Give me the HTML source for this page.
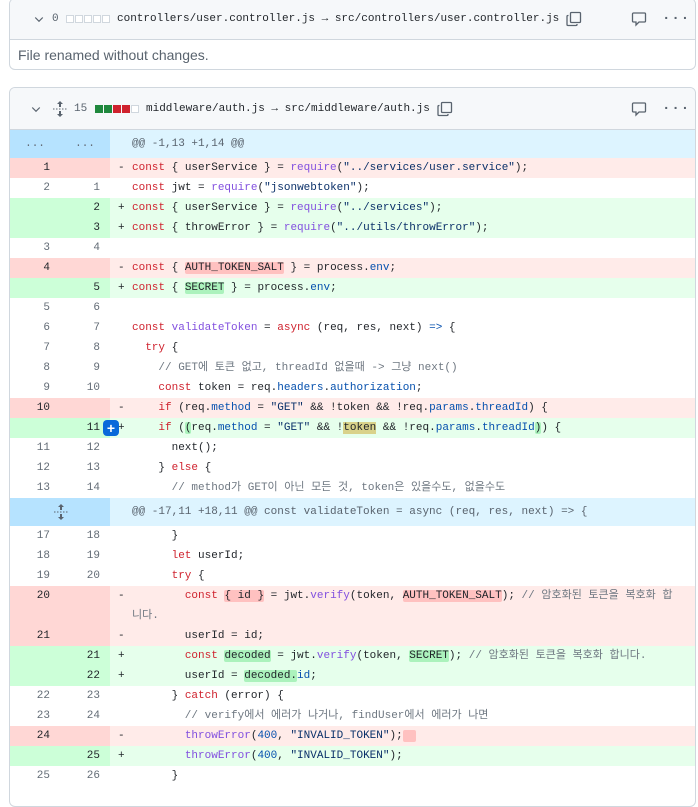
<!DOCTYPE html>
<html><head><meta charset="utf-8"><style>
*{box-sizing:border-box;margin:0;padding:0}
body{width:698px;height:785px;overflow:hidden;background:#fff;font-family:"Liberation Sans","Noto Sans CJK KR",sans-serif;position:relative}
.box{position:absolute;left:9px;width:687px;border:1px solid #d0d7de;border-radius:6px;overflow:hidden;background:#fff}
.hdr{height:42px;background:#f6f8fa;border-bottom:1px solid #d0d7de;position:relative;font-family:"Liberation Mono","Noto Sans CJK KR",monospace;font-size:11px;color:#1f2328}
.hdr>*{position:absolute;top:50%;transform:translateY(-50%);white-space:nowrap}
.sq{display:inline-block;width:8px;height:8px;margin-right:1px;vertical-align:middle}
.mono{font-family:"Liberation Mono","Noto Sans CJK KR",monospace;font-size:11px}
.row{display:flex;height:20px;line-height:20px;color:#1f2328}
.o,.n{width:50px;text-align:right;padding-right:10px;color:#636c76;flex:none}
.c{flex:1;position:relative;white-space:pre}
.c .s{position:absolute;left:8px}
.c .t{position:absolute;left:22px;white-space:pre}
.del{background:#ffebe9}.del .o,.del .n{background:#ffd7d5;color:#1f2328}
.add{background:#e6ffec}.add .o,.add .n{background:#ccffd8;color:#1f2328}
.hunk{height:28px;line-height:28px;background:#ddf4ff}
.hunk .g{width:100px;background:#b6e3ff;flex:none;color:#636c76}
.hunk .c{color:#59636e;padding-left:22px}
.k{color:#cf222e}.f{color:#8250df}.p{color:#0550ae}.st{color:#0a3069}.cm{color:#6e7781}
.dx{background:#ffc1c0;border-radius:2px}.ax{background:#abf2bc;border-radius:2px}
.ay{background:#d9d28a;}
</style></head><body>

<div class="box" style="top:-2px;height:72px">
 <div class="hdr" style="height:41px">
  <svg style="left:23px" width="12" height="12" viewBox="0 0 16 16"><path d="M3 6l5 5 5-5" stroke="#59636e" stroke-width="1.6" fill="none"/></svg>
  <span style="left:42px;color:#59636e">0</span>
  <span style="left:56px;line-height:0"><i class="sq" style="background:#fff;border:1px solid #d0d7de"></i><i class="sq" style="background:#fff;border:1px solid #d0d7de"></i><i class="sq" style="background:#fff;border:1px solid #d0d7de"></i><i class="sq" style="background:#fff;border:1px solid #d0d7de"></i><i class="sq" style="background:#fff;border:1px solid #d0d7de"></i></span>
  <span style="left:107px">controllers/user.controller.js → src/controllers/user.controller.js</span>
  <svg style="left:556px" width="16" height="16" viewBox="0 0 16 16"><path d="M5.5 1.5h8a1 1 0 011 1v8a1 1 0 01-1 1h-8a1 1 0 01-1-1v-8a1 1 0 011-1zM2.5 4.5h-0.5a1 1 0 00-1 1v8a1 1 0 001 1h8a1 1 0 001-1v-.5" stroke="#59636e" stroke-width="1.3" fill="none"/></svg>
  <svg style="left:621px" width="16" height="16" viewBox="0 0 16 16"><path d="M2.5 2h11a1 1 0 011 1v7a1 1 0 01-1 1H8l-3 3v-3H2.5a1 1 0 01-1-1V3a1 1 0 011-1z" stroke="#59636e" stroke-width="1.3" fill="none"/></svg>
  <span style="left:652px;color:#59636e;font-size:14px;letter-spacing:1px;font-weight:bold">···</span>
 </div>
 <div style="padding:0 8px;line-height:30px;font-size:14px;color:#59636e">File renamed without changes.</div>
</div>

<div class="box" style="top:87px;height:720px">
 <div class="hdr">
  <svg style="left:20px" width="12" height="12" viewBox="0 0 16 16"><path d="M3 6l5 5 5-5" stroke="#59636e" stroke-width="1.6" fill="none"/></svg>
  <svg style="left:43px" width="14" height="16" viewBox="0 0 14 16"><path d="M7 0l-3 3h2v3h2V3h2zM7 16l-3-3h2v-3h2v3h2z" fill="#59636e"/><path d="M0 8h14" stroke="#59636e" stroke-dasharray="1.5 1.5"/></svg>
  <span style="left:64px;color:#59636e">15</span>
  <span style="left:85px;line-height:0"><i class="sq" style="background:#1f883d"></i><i class="sq" style="background:#1f883d"></i><i class="sq" style="background:#cf222e"></i><i class="sq" style="background:#cf222e"></i><i class="sq" style="background:#fff;border:1px solid #d0d7de"></i></span>
  <span style="left:136px">middleware/auth.js → src/middleware/auth.js</span>
  <svg style="left:427px" width="16" height="16" viewBox="0 0 16 16"><path d="M5.5 1.5h8a1 1 0 011 1v8a1 1 0 01-1 1h-8a1 1 0 01-1-1v-8a1 1 0 011-1zM2.5 4.5h-0.5a1 1 0 00-1 1v8a1 1 0 001 1h8a1 1 0 001-1v-.5" stroke="#59636e" stroke-width="1.3" fill="none"/></svg>
  <svg style="left:621px" width="16" height="16" viewBox="0 0 16 16"><path d="M2.5 2h11a1 1 0 011 1v7a1 1 0 01-1 1H8l-3 3v-3H2.5a1 1 0 01-1-1V3a1 1 0 011-1z" stroke="#59636e" stroke-width="1.3" fill="none"/></svg>
  <span style="left:652px;color:#59636e;font-size:14px;letter-spacing:1px;font-weight:bold">···</span>
 </div>
 <div class="mono">
<div class="row hunk"><div class="g" style="display:flex"><span style="width:50px;text-align:center">...</span><span style="width:50px;text-align:center">...</span></div><div class="c">@@ -1,13 +1,14 @@</div></div>
<div class="row del"><div class="o">1</div><div class="n"></div><div class="c"><span class="s">-</span><span class="t"><span class="k">const</span> { userService } = <span class="f">require</span>(<span class="st">"../services/user.service"</span>);</span></div></div>
<div class="row"><div class="o">2</div><div class="n">1</div><div class="c"><span class="t"><span class="k">const</span> jwt = <span class="f">require</span>(<span class="st">"jsonwebtoken"</span>);</span></div></div>
<div class="row add"><div class="o"></div><div class="n">2</div><div class="c"><span class="s">+</span><span class="t"><span class="k">const</span> { userService } = <span class="f">require</span>(<span class="st">"../services"</span>);</span></div></div>
<div class="row add"><div class="o"></div><div class="n">3</div><div class="c"><span class="s">+</span><span class="t"><span class="k">const</span> { throwError } = <span class="f">require</span>(<span class="st">"../utils/throwError"</span>);</span></div></div>
<div class="row"><div class="o">3</div><div class="n">4</div><div class="c"></div></div>
<div class="row del"><div class="o">4</div><div class="n"></div><div class="c"><span class="s">-</span><span class="t"><span class="k">const</span> { <span class="dx">AUTH_TOKEN_SALT</span> } = process.<span class="p">env</span>;</span></div></div>
<div class="row add"><div class="o"></div><div class="n">5</div><div class="c"><span class="s">+</span><span class="t"><span class="k">const</span> { <span class="ax">SECRET</span> } = process.<span class="p">env</span>;</span></div></div>
<div class="row"><div class="o">5</div><div class="n">6</div><div class="c"></div></div>
<div class="row"><div class="o">6</div><div class="n">7</div><div class="c"><span class="t"><span class="k">const</span> <span class="f">validateToken</span> = <span class="k">async</span> (req, res, next) <span class="p">=&gt;</span> {</span></div></div>
<div class="row"><div class="o">7</div><div class="n">8</div><div class="c"><span class="t">  <span class="k">try</span> {</span></div></div>
<div class="row"><div class="o">8</div><div class="n">9</div><div class="c"><span class="t cm">    // GET에 토큰 없고, threadId 없을때 -&gt; 그냥 next()</span></div></div>
<div class="row"><div class="o">9</div><div class="n">10</div><div class="c"><span class="t">    <span class="k">const</span> token = req.<span class="p">headers</span>.<span class="p">authorization</span>;</span></div></div>
<div class="row del"><div class="o">10</div><div class="n"></div><div class="c"><span class="s">-</span><span class="t">    <span class="k">if</span> (req.<span class="p">method</span> = <span class="st">"GET"</span> &amp;&amp; !token &amp;&amp; !req.<span class="p">params</span>.<span class="p">threadId</span>) {</span></div></div>
<div class="row add"><div class="o"></div><div class="n" style="position:relative">11<span style="position:absolute;left:43px;top:2px;width:16px;height:16px;background:#0969da;border-radius:4px;color:#fff;font-size:14px;line-height:16px;text-align:center;font-weight:bold;z-index:2;font-family:'Liberation Sans',sans-serif">+</span></div><div class="c"><span class="s">+</span><span class="t">    <span class="k">if</span> (<span class="ax">(</span>req.<span class="p">method</span> = <span class="st">"GET"</span> &amp;&amp; !<span class="ay">token</span> &amp;&amp; !req.<span class="p">params</span>.<span class="p">threadId</span><span class="ax">)</span>) {</span></div></div>
<div class="row"><div class="o">11</div><div class="n">12</div><div class="c"><span class="t">      next();</span></div></div>
<div class="row"><div class="o">12</div><div class="n">13</div><div class="c"><span class="t">    } <span class="k">else</span> {</span></div></div>
<div class="row"><div class="o">13</div><div class="n">14</div><div class="c"><span class="t cm">      // method가 GET이 아닌 모든 것, token은 있을수도, 없을수도</span></div></div>
<div class="row hunk"><div class="g" style="position:relative"><svg style="position:absolute;left:44px;top:6px" width="14" height="16" viewBox="0 0 14 16"><path d="M7 0l-3 3h2v3h2V3h2zM7 16l-3-3h2v-3h2v3h2z" fill="#59636e"/><path d="M0 8h14" stroke="#59636e" stroke-dasharray="1.5 1.5"/></svg></div><div class="c">@@ -17,11 +18,11 @@ const validateToken = async (req, res, next) =&gt; {</div></div>
<div class="row"><div class="o">17</div><div class="n">18</div><div class="c"><span class="t">      }</span></div></div>
<div class="row"><div class="o">18</div><div class="n">19</div><div class="c"><span class="t">      <span class="k">let</span> userId;</span></div></div>
<div class="row"><div class="o">19</div><div class="n">20</div><div class="c"><span class="t">      <span class="k">try</span> {</span></div></div>
<div class="row del" style="height:40px"><div class="o" style="line-height:20px">20</div><div class="n"></div><div class="c"><span class="s">-</span><span class="t">        <span class="k">const</span> <span class="dx">{ id }</span> = jwt.<span class="f">verify</span>(token, <span class="dx">AUTH_TOKEN_SALT</span>); <span class="cm">// 암호화된 토큰을 복호화 합</span></span><span class="t cm" style="top:20px">니다.</span></div></div>
<div class="row del"><div class="o">21</div><div class="n"></div><div class="c"><span class="s">-</span><span class="t">        userId = id;</span></div></div>
<div class="row add"><div class="o"></div><div class="n">21</div><div class="c"><span class="s">+</span><span class="t">        <span class="k">const</span> <span class="ax">decoded</span> = jwt.<span class="f">verify</span>(token, <span class="ax">SECRET</span>); <span class="cm">// 암호화된 토큰을 복호화 합니다.</span></span></div></div>
<div class="row add"><div class="o"></div><div class="n">22</div><div class="c"><span class="s">+</span><span class="t">        userId = <span class="ax">decoded.</span><span class="p">id</span>;</span></div></div>
<div class="row"><div class="o">22</div><div class="n">23</div><div class="c"><span class="t">      } <span class="k">catch</span> (error) {</span></div></div>
<div class="row"><div class="o">23</div><div class="n">24</div><div class="c"><span class="t cm">        // verify에서 에러가 나거나, findUser에서 에러가 나면</span></div></div>
<div class="row del"><div class="o">24</div><div class="n"></div><div class="c"><span class="s">-</span><span class="t">        <span class="f">throwError</span>(<span class="p">400</span>, <span class="st">"INVALID_TOKEN"</span>);<span class="dx">  </span></span></div></div>
<div class="row add"><div class="o"></div><div class="n">25</div><div class="c"><span class="s">+</span><span class="t">        <span class="f">throwError</span>(<span class="p">400</span>, <span class="st">"INVALID_TOKEN"</span>);</span></div></div>
<div class="row"><div class="o">25</div><div class="n">26</div><div class="c"><span class="t">      }</span></div></div>
 </div>
</div>
</body></html>
